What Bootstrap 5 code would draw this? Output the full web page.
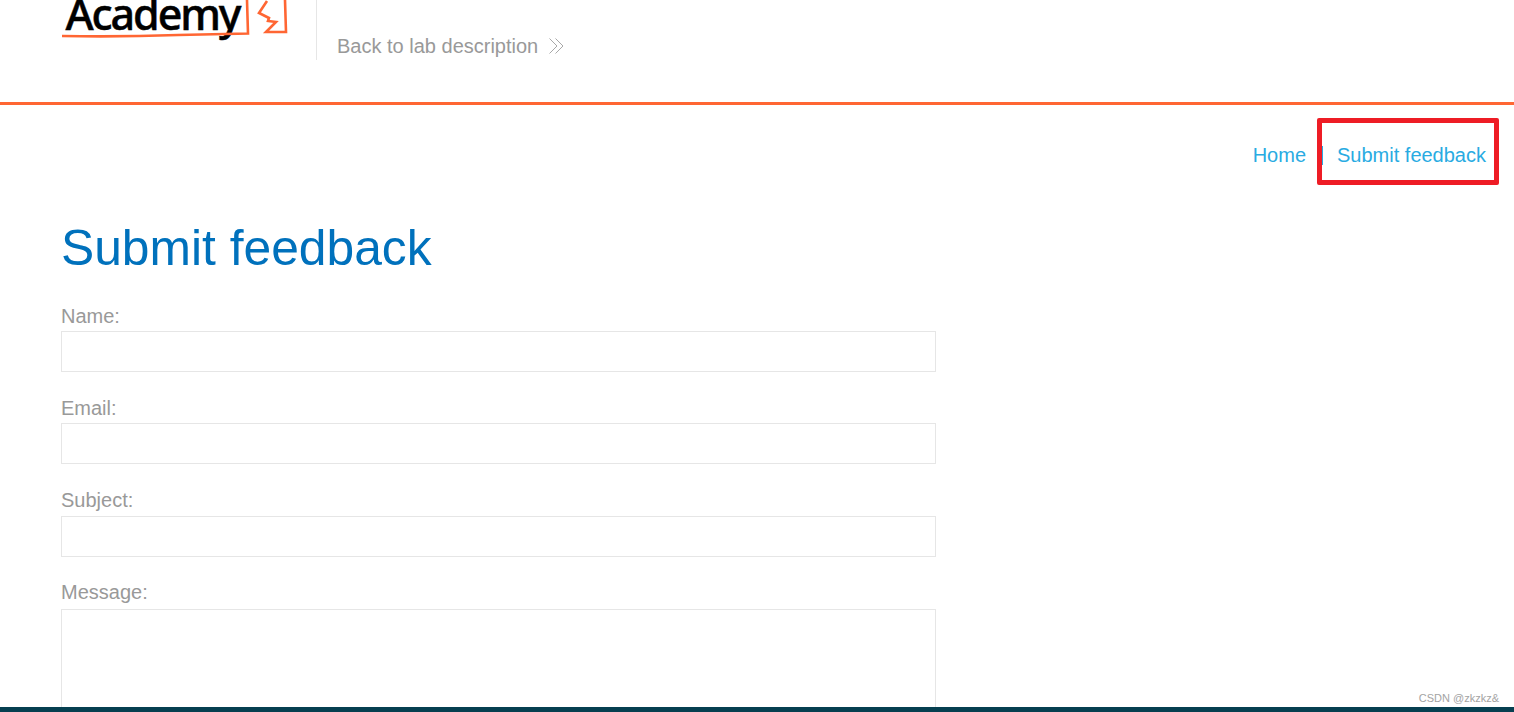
<!DOCTYPE html>
<html lang="en">
<head>
<meta charset="utf-8">
<title>Submit feedback</title>
<link href="https://cdn.jsdelivr.net/npm/bootstrap@5.3.0/dist/css/bootstrap.min.css" rel="stylesheet">
<style>
html,body{height:712px;overflow:hidden}
body{font-family:"Liberation Sans",Arial,sans-serif;color:#999;background:#fff;font-size:20px;position:relative}
.lab-head{height:105px;border-bottom:3px solid #ff6633;padding-left:60px}
.logo-box{width:257px;height:60px;border-right:1px solid #e6e6e6;flex:none}
.logo-box svg{display:block}
.logo-word{font-family:"Noto Sans","Open Sans",sans-serif;font-size:43px;font-weight:500;letter-spacing:-2.1px;fill:#000;stroke:#000;stroke-width:.5px}
.back-link{color:#999;text-decoration:none;font-size:20px;line-height:23px;margin:35px 0 0 20px;height:23px}
.back-link svg{margin-left:11px;vertical-align:-1px}
.top-links{height:101px;padding:39px 28px 0 0;line-height:23px}
.top-links a{color:#29abe2;text-decoration:none}
.top-sep{flex:none;width:1px;height:19px;background:#29abe2;margin:2px 14px 0 16px}
.page-wrap{padding-left:61px;height:506px;overflow:hidden}
.page-title{color:#0071bc;font-size:49.75px;line-height:57px;font-weight:400;margin:14px 0 28px}
.fb-form{width:875px}
.fb-label{display:block;font-size:20px;line-height:23px;color:#999;margin:0 0 3px}
.fb-label-mid{margin-bottom:4px}
.fb-label-last{margin-bottom:5px}
.fb-input{display:block;width:100%;height:41px;border:1px solid #e6e6e6;background:#fff;margin-bottom:25px;border-radius:0}
.fb-input-tight{margin-bottom:24px}
.fb-area{height:120px;resize:none}
.note-box{position:absolute;left:1317px;top:118px;width:182px;height:67px;border:5px solid #ee1c25;border-radius:2px}
.foot-bar{position:absolute;left:0;right:0;bottom:0;height:5px;background:#063f50}
.watermark{position:absolute;right:15px;bottom:7px;font-size:11px;line-height:13px;color:#a3a3a3}
</style>
</head>
<body>
<header class="lab-head d-flex align-items-start">
  <div class="logo-box">
    <svg width="240" height="42" viewBox="0 0 240 42" role="img" aria-label="Web Security Academy">
      <text class="logo-word" x="5.5" y="29.5">Academy</text>
      <path d="M2 36 Q60 37 118 35 L188 33.5 L187 0" fill="none" stroke="#ff6633" stroke-width="2.6"/>
      <path d="M207 1 L199 13 L209 18 L208 21 L216 22 L206 32 L226 32 L225 0" fill="none" stroke="#ff6633" stroke-width="2.6"/>
    </svg>
  </div>
  <a class="back-link" href="#">Back to lab description<svg width="15" height="16" viewBox="0 0 15 16"><path d="M.5 .5l7.5 7.5-7.5 7.5M6.5 .5l7.5 7.5-7.5 7.5" fill="none" stroke="#a8a8a8" stroke-width="1"/></svg></a>
</header>
<nav class="top-links d-flex justify-content-end">
  <a href="#">Home</a><span class="top-sep"></span><a href="#">Submit feedback</a>
</nav>
<main class="page-wrap">
  <h1 class="page-title">Submit feedback</h1>
  <form class="fb-form">
    <label class="fb-label" for="f1">Name:</label>
    <input class="fb-input" id="f1" type="text">
    <label class="fb-label" for="f2">Email:</label>
    <input class="fb-input" id="f2" type="text">
    <label class="fb-label fb-label-mid" for="f3">Subject:</label>
    <input class="fb-input fb-input-tight" id="f3" type="text">
    <label class="fb-label fb-label-last" for="f4">Message:</label>
    <textarea class="fb-input fb-area" id="f4"></textarea>
  </form>
</main>
<div class="note-box"></div>
<div class="foot-bar"></div>
<div class="watermark">CSDN @zkzkz&amp;</div>
<script src="https://cdn.jsdelivr.net/npm/bootstrap@5.3.0/dist/js/bootstrap.bundle.min.js"></script>
</body>
</html>
